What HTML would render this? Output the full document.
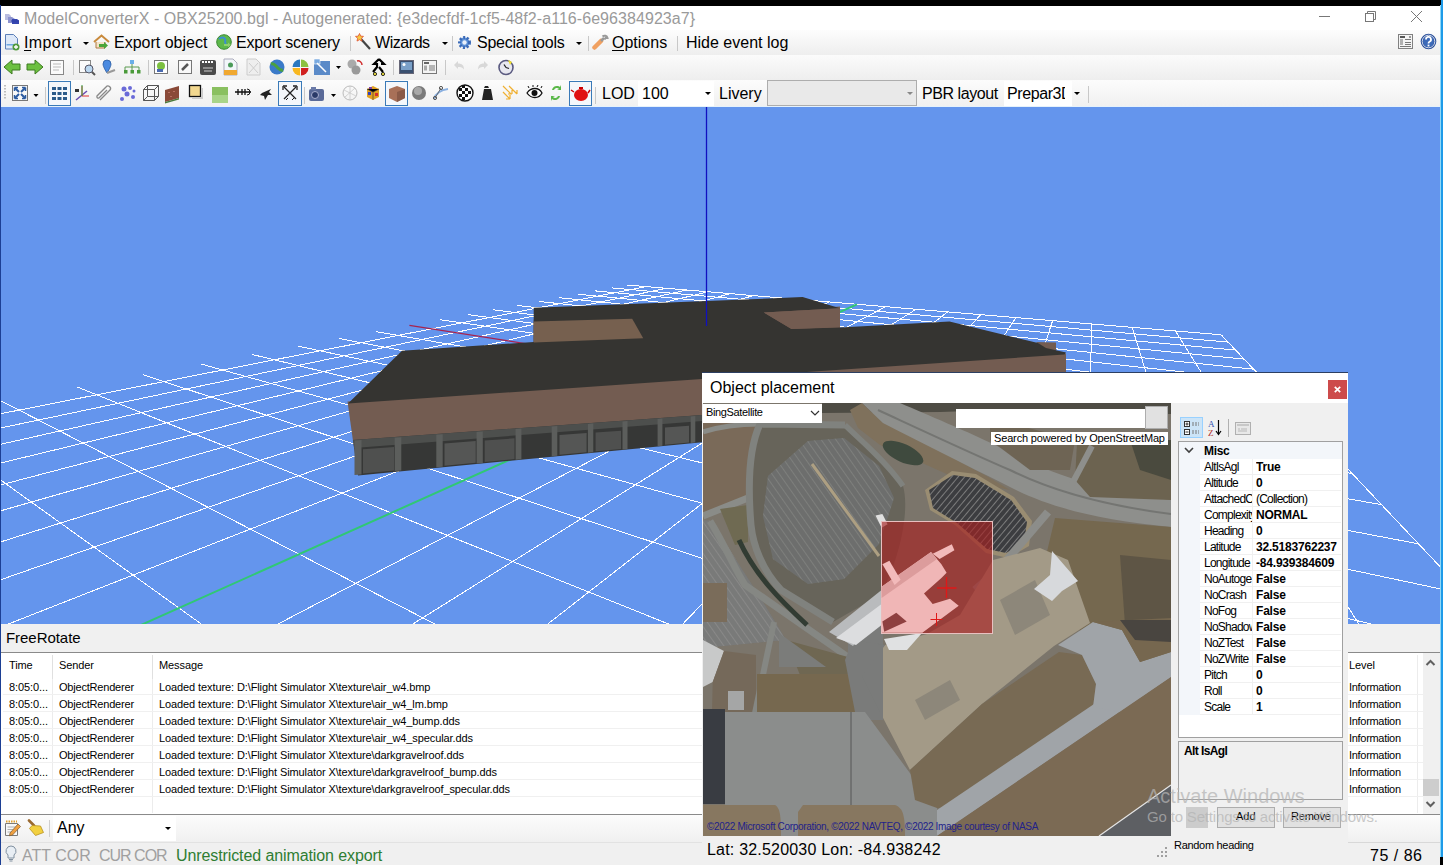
<!DOCTYPE html>
<html><head><meta charset="utf-8">
<style>
*{box-sizing:border-box}
html,body{margin:0;padding:0}
body{width:1443px;height:865px;overflow:hidden;position:relative;background:#f0f0f0;font-family:"Liberation Sans",sans-serif;color:#000}
.a{position:absolute}
.t{position:absolute;white-space:pre;line-height:1}
.sep{position:absolute;width:1px;background:#c8c8c8}
.ic{position:absolute}
</style></head><body>

<!-- title bar -->
<div class="a" style="left:0;top:5px;width:1443px;height:25px;background:#fff"></div>
<svg class="ic" style="left:3px;top:13px" width="17" height="12" viewBox="0 0 17 12"><path d="M2 1h4l2 2v4H2z" fill="#b9bde0"/><path d="M5 4h4l3 2v4H5z" fill="#8c93cf"/><path d="M9 6h5l2 1.5V11H9z" fill="#3646b0"/><path d="M8 8h8" stroke="#2e3ea8"/></svg>
<div class="t" style="left:24px;top:11px;font-size:16px;color:#9a9a9a;letter-spacing:0.06px">ModelConverterX - OBX25200.bgl - Autogenerated: {e3decfdf-1cf5-48f2-a116-6e96384923a7}</div>
<div class="a" style="left:1319px;top:16px;width:11px;height:1px;background:#777"></div>
<svg class="ic" style="left:1364px;top:10px" width="13" height="13" viewBox="0 0 13 13"><rect x="1.5" y="3.5" width="8" height="8" fill="none" stroke="#777"/><path d="M3.5 3.5V1.5h8v8h-2" fill="none" stroke="#777"/></svg>
<svg class="ic" style="left:1410px;top:10px" width="13" height="13" viewBox="0 0 13 13"><path d="M1 1L12 12M12 1L1 12" stroke="#777" stroke-width="1"/></svg>
<!-- toolbar 1 -->
<div class="a" style="left:0;top:30px;width:1443px;height:25px;background:linear-gradient(#fdfdfd,#eeeeee)"></div>
<svg class="ic" style="left:4px;top:33px" width="16" height="18" viewBox="0 0 16 18"><path d="M1.5 1.5h8l4 4v10.5h-12z" fill="#dde8f8" stroke="#5b7fb8"/><rect x="2.5" y="11" width="8" height="1.5" fill="#6fa8e0"/><circle cx="12" cy="14" r="3.5" fill="#4f9a3a"/><path d="M12 12v4M10 14h4" stroke="#fff" stroke-width="1.3"/></svg>
<div class="t" style="left:24px;top:35px;font-size:16px;letter-spacing:0.4px">Import</div>
<div class="a" style="left:24px;top:50px;width:7px;height:1px;background:#000"></div>
<svg class="ic" style="left:83px;top:42px" width="6" height="4"><path d="M0 0h6L3 3z" fill="#000"/></svg>
<svg class="ic" style="left:93px;top:34px" width="17" height="16" viewBox="0 0 17 16"><path d="M1 8L8.5 1.5L16 8" fill="none" stroke="#c98a3c" stroke-width="2"/><path d="M3 8v6h9V8" fill="#f3e2c6" stroke="#b07a40"/><path d="M6 10h5V8l4 3.5-4 3.5v-2H6z" fill="#4aa53a"/></svg>
<div class="t" style="left:114px;top:35px;font-size:16px">Export object</div>
<svg class="ic" style="left:216px;top:34px" width="16" height="16" viewBox="0 0 16 16"><circle cx="8" cy="8" r="7.3" fill="#5db84a" stroke="#3d8a35"/><path d="M3 5c2-2 5-2 6 0s-1 3 1 5" fill="none" stroke="#3c8fd0" stroke-width="2"/><path d="M8 10h4V8.5l3 2.5-3 2.5V12H8z" fill="#8fd070"/></svg>
<div class="t" style="left:236px;top:35px;font-size:16px;letter-spacing:-0.2px">Export scenery</div>
<div class="sep" style="left:350px;top:36px;height:15px"></div>
<svg class="ic" style="left:355px;top:33px" width="16" height="17" viewBox="0 0 16 17"><path d="M6 6L15 16" stroke="#444" stroke-width="2.2"/><path d="M4.5 0.5l1.2 2.6 2.8.3-2.1 1.9.6 2.8-2.5-1.4-2.5 1.4.6-2.8-2.1-1.9 2.8-.3z" fill="#f6c940" stroke="#e05030" stroke-width="0.8"/></svg>
<div class="t" style="left:375px;top:35px;font-size:16px;letter-spacing:-0.45px">Wizards</div>
<svg class="ic" style="left:442px;top:42px" width="6" height="4"><path d="M0 0h6L3 3z" fill="#000"/></svg>
<div class="sep" style="left:452px;top:36px;height:15px"></div>
<svg class="ic" style="left:457px;top:35px" width="15" height="15" viewBox="0 0 15 15"><circle cx="7.5" cy="7.5" r="5" fill="#5b8fd6" stroke="#3a6ab8" stroke-width="3" stroke-dasharray="2 1.6"/><circle cx="7.5" cy="7.5" r="2.2" fill="#e8f0fb"/></svg>
<div class="t" style="left:477px;top:35px;font-size:16px;letter-spacing:-0.25px">Special tools</div>
<div class="a" style="left:532px;top:50px;width:5px;height:1px;background:#000"></div>
<svg class="ic" style="left:576px;top:42px" width="6" height="4"><path d="M0 0h6L3 3z" fill="#000"/></svg>
<div class="sep" style="left:588px;top:36px;height:15px"></div>
<svg class="ic" style="left:592px;top:33px" width="17" height="17" viewBox="0 0 17 17"><path d="M2.5 14.5L9 8" stroke="#f0a060" stroke-width="4.5" stroke-linecap="round"/><path d="M9 8l3-3" stroke="#999" stroke-width="2.5"/><path d="M10.5 3.5a3 3 0 0 1 5 1.5l-2 0-1 1.5" fill="none" stroke="#999" stroke-width="2"/></svg>
<div class="t" style="left:612px;top:35px;font-size:16px">Options</div>
<div class="a" style="left:612px;top:50px;width:12px;height:1px;background:#000"></div>
<div class="sep" style="left:677px;top:36px;height:15px"></div>
<div class="t" style="left:686px;top:35px;font-size:16px">Hide event log</div>
<svg class="ic" style="left:1397px;top:33px" width="17" height="17" viewBox="0 0 17 17" shape-rendering="crispEdges"><rect x="1.5" y="1.5" width="14" height="14" fill="#f4f4f4" stroke="#808080"/><rect x="3" y="3" width="5" height="2" fill="#555"/><rect x="12" y="3" width="2" height="2" fill="#999"/><rect x="3" y="6" width="3" height="6" fill="#b0b0b0"/><path d="M8 6.5h6M8 9.5h6M8 11.5h6M3 13.5h11" stroke="#777"/></svg>
<svg class="ic" style="left:1420px;top:33px" width="17" height="17" viewBox="0 0 17 17"><circle cx="8.5" cy="8.5" r="7.8" fill="#2a4f9a"/><circle cx="8.5" cy="8.5" r="6.3" fill="none" stroke="#fff" stroke-width="0.8"/><circle cx="8.5" cy="8.5" r="5.5" fill="#3d6ab8"/><path d="M6 6.5a2.5 2.5 0 1 1 3.5 2.2c-.8.4-1 .9-1 1.8" fill="none" stroke="#fff" stroke-width="1.8"/><rect x="7.6" y="11.6" width="1.8" height="1.8" fill="#fff"/></svg>
<!-- toolbar 2 -->
<div class="a" style="left:0;top:55px;width:1443px;height:25px;background:linear-gradient(#fbfbfb,#eeeeee)"></div>
<svg class="ic" style="left:3px;top:58px" width="520" height="18" viewBox="0 0 520 18">
<path d="M1 9L9 2v4h8v6H9v4z" fill="#6cc040" stroke="#3d7a20"/>
<path d="M40 9L32 2v4h-8v6h8v4z" fill="#6cc040" stroke="#3d7a20"/>
<rect x="47.5" y="2.5" width="13" height="14" fill="#fbfbfb" stroke="#888"/><path d="M50 6h8M50 9h8M50 12h6" stroke="#bbb"/>
<rect x="70" y="2" width="1" height="15" fill="#c8c8c8"/>
<rect x="76.5" y="2.5" width="11" height="12" fill="#fbfbfb" stroke="#888"/><circle cx="86" cy="11" r="4" fill="#bcd8f0" stroke="#556"/><path d="M89 14l3 3" stroke="#555" stroke-width="2"/>
<path d="M104 2a4 4 0 0 1 4 4c0 3-4 9-4 9s-4-6-4-9a4 4 0 0 1 4-4z" fill="#4a8ae0" stroke="#2a5aa0" stroke-width="0.8"/><path d="M104 15l8-3" stroke="#999" stroke-width="2"/>
<rect x="127" y="2" width="4" height="4" fill="#6aaee8"/><path d="M129 6v3M122 9h14M122 9v3M129 9v3M136 9v3" stroke="#5a9a50"/><rect x="121" y="12" width="3.5" height="3.5" fill="#4a9a3a"/><rect x="127.5" y="12" width="3.5" height="3.5" fill="#4a9a3a"/><rect x="134" y="12" width="3.5" height="3.5" fill="#4a9a3a"/>
<rect x="145" y="2" width="1" height="15" fill="#c8c8c8"/>
<rect x="151.5" y="2.5" width="13" height="13" fill="#fff" stroke="#777"/><circle cx="158" cy="8" r="4" fill="#7cc040"/><rect x="154" y="11" width="6" height="3" fill="#4a6ab0"/>
<rect x="175.5" y="2.5" width="13" height="13" fill="#f8f8f8" stroke="#777"/><path d="M179 12l6-6" stroke="#555" stroke-width="2.5"/>
<rect x="197" y="2" width="16" height="15" rx="2" fill="#4a4a4a"/><path d="M199 4h12" stroke="#fff" stroke-width="2" stroke-dasharray="2 1"/><path d="M200 10h10M201 13h8" stroke="#ccc"/>
<path d="M221 1h9l4 4v12h-13z" fill="#f2f6fa" stroke="#aab"/><rect x="221" y="12" width="13" height="5" fill="#f0a830"/><circle cx="227.5" cy="7" r="2.5" fill="#4a9a5a"/>
<path d="M244 1h9l4 4v12h-13z" fill="#eee" stroke="#ccc"/><path d="M246 5l9 10M255 5l-9 10" stroke="#ccc"/>
<circle cx="274" cy="9" r="7.5" fill="#3a7ac8"/><path d="M268 6c3-1 4 1 6 3s3 4 6 3" fill="none" stroke="#4aa040" stroke-width="3"/>
<path d="M297 9V1.5a7.5 7.5 0 0 0-7.5 7.5z" fill="#2a78c0"/><path d="M298 9V1.5a7.5 7.5 0 0 1 7.5 7.5z" fill="#8cc040"/><path d="M297 10v7.5A7.5 7.5 0 0 1 289.5 10z" fill="#f8b820"/><path d="M298 10v7.5a7.5 7.5 0 0 0 7.5-7.5z" fill="#d02020"/>
<rect x="311" y="3" width="16" height="14" fill="#5a8ac8"/><rect x="311" y="1" width="6" height="5" fill="#7aaae0" stroke="#fff" stroke-width="0.6"/><path d="M314 5l9 9" stroke="#fff" stroke-width="1.5"/>
<path d="M333 8h5l-2.5 3z" fill="#000"/>
<circle cx="349" cy="6" r="4.5" fill="#aaa"/><circle cx="353" cy="12" r="4.5" fill="#999"/><path d="M354 3a4 4 0 0 1 5 4" fill="none" stroke="#d03030" stroke-width="1.5"/>
<path d="M376 1l-5 5h3v3l-4 5M376 9l4 5M376 1l5 5h-3" fill="none" stroke="#000" stroke-width="2.2"/><circle cx="372" cy="16" r="1.6" fill="#f0e040" stroke="#000" stroke-width="0.8"/><circle cx="380" cy="16" r="1.6" fill="#f0e040" stroke="#000" stroke-width="0.8"/>
<rect x="390" y="2" width="1" height="15" fill="#c8c8c8"/>
<rect x="396.5" y="2.5" width="14" height="13" fill="#3a5070" stroke="#667"/><rect x="398" y="4" width="11" height="8" fill="#7aa0c8"/><circle cx="401" cy="6.5" r="1.5" fill="#fff"/>
<rect x="419.5" y="2.5" width="14" height="13" fill="#f4f4f4" stroke="#777"/><rect x="421" y="4" width="5" height="2" fill="#666"/><rect x="421" y="7.5" width="3" height="5" fill="#aaa"/><path d="M426 8h6M426 10h6M426 12h6" stroke="#777"/>
<rect x="442" y="2" width="1" height="15" fill="#c8c8c8"/>
<path d="M451 7l4-4v2.5c4 0 6 2 6 6-1.5-2-3-2.5-6-2.5V11z" fill="#d8d8d8"/>
<path d="M485 7l-4-4v2.5c-4 0-6 2-6 6 1.5-2 3-2.5 6-2.5V11z" fill="#d8d8d8"/>
<circle cx="503" cy="9.5" r="7" fill="#e8e8f0" stroke="#5a5a80" stroke-width="1.6"/><path d="M503 9.5l-2-3M503 9.5l3 1" stroke="#222" stroke-width="1.3"/><path d="M505 2l4 2-2 3z" fill="#f0e030"/>
</svg>
<!-- toolbar 3 -->
<div class="a" style="left:0;top:80px;width:1443px;height:27px;background:linear-gradient(#fcfcfc,#f0f0f0)"></div>
<div class="a" style="left:0;top:106px;width:1443px;height:1px;background:#e6f2fb"></div>
<svg class="ic" style="left:0;top:80px" width="600" height="27" viewBox="0 0 600 27">
<path d="M5 5v1.5M5 8v1.5M5 11v1.5M5 14v1.5M5 17v1.5" stroke="#aaa" stroke-width="1.5"/>
<rect x="12.5" y="5.5" width="15" height="15" fill="#f8f8f8" stroke="#777"/><path d="M15 8l4 4M25 8l-4 4M15 18l4-4M25 18l-4-4" stroke="#2a5aa0" stroke-width="2"/><path d="M14.5 7.5h3.5M14.5 7.5v3.5M25.5 7.5h-3.5M25.5 7.5v3.5M14.5 18.5h3.5M14.5 18.5v-3.5M25.5 18.5h-3.5M25.5 18.5v-3.5" stroke="#2a5aa0" stroke-width="1.5"/>
<path d="M33.5 14h5l-2.5 3z" fill="#000"/>
<rect x="45" y="7" width="1" height="17" fill="#c8c8c8"/>
<rect x="48.5" y="1.5" width="22" height="24" fill="#f4f7fb" stroke="#3a7ab8"/><g fill="#2a5a8a"><rect x="52" y="7" width="4" height="3"/><rect x="57.5" y="7" width="4" height="3"/><rect x="63" y="7" width="4" height="3"/><rect x="52" y="12" width="4" height="3"/><rect x="57.5" y="12" width="4" height="3"/><rect x="63" y="12" width="4" height="3"/><rect x="52" y="17" width="4" height="3"/><rect x="57.5" y="17" width="4" height="3"/><rect x="63" y="17" width="4" height="3"/></g>
<path d="M76 20l11-9" stroke="#6a4ab0" stroke-width="1.5"/><path d="M82 16h7M82 16V6" stroke="#e03030"/><path d="M82 16V5" stroke="#30a040"/><rect x="75" y="9" width="4" height="3" fill="#333"/>
<path d="M100 20l10-10a2.5 2.5 0 0 0-4-3l-9 9a1.5 1.5 0 0 0 2 2l8-8" fill="none" stroke="#888" stroke-width="1.3"/>
<g fill="#6a6ad8"><circle cx="124" cy="9" r="2.5"/><circle cx="130" cy="8" r="2"/><circle cx="127" cy="14" r="2.5"/><circle cx="133" cy="17" r="2"/><circle cx="122" cy="19" r="2"/><circle cx="134" cy="11" r="1.5"/></g>
<path d="M143.5 9.5h11v11h-11zM147.5 5.5h11v11h-11zM143.5 9.5l4-4M154.5 9.5l4-4M154.5 20.5l4-4M143.5 20.5l4-4" fill="none" stroke="#555"/>
<path d="M165 10l14-4v12l-14 4z" fill="#8a4a38"/><path d="M165 22l14-4v1.5l-14 4z" fill="#4a7a3a"/><g fill="#b87060"><rect x="168" y="12" width="2" height="1"/><rect x="173" y="11" width="2" height="1"/><rect x="170" y="16" width="2" height="1"/></g>
<rect x="189.5" y="5.5" width="11" height="11" fill="#f2d890" stroke="#111" stroke-width="1.3"/><rect x="192" y="17" width="11" height="2" fill="#ccc"/><rect x="201" y="8" width="2" height="11" fill="#ccc"/>
<rect x="212" y="7" width="16" height="16" fill="#8ac060"/><rect x="212" y="15" width="16" height="8" fill="#a8d488"/>
<path d="M235 12h16M238 9v6M242 9v6M245 9v6" stroke="#111" stroke-width="1.3"/><path d="M247 9a3 3 0 0 1 0 6" fill="none" stroke="#111"/>
<path d="M262 13l9-4-2 3 3 3-4 0-3 5-1-4-4-1z" fill="#222"/>
<rect x="278.5" y="1.5" width="23" height="24" fill="#f4f7fb" stroke="#3a7ab8"/><path d="M284 7l12 12M296 7l-12 12" stroke="#222" stroke-width="1.3"/><path d="M283 6h4M283 6v4M297 6h-4M297 6v4" stroke="#222" stroke-width="1.3"/><path d="M286 20l2-2M292 20l2-2" stroke="#222"/>
<rect x="304" y="7" width="1" height="17" fill="#c8c8c8"/>
<rect x="309" y="9" width="15" height="12" rx="2" fill="#5a6a98"/><rect x="311" y="7" width="5" height="3" fill="#6a7aa8"/><circle cx="315" cy="15" r="3.5" fill="#2a3a68" stroke="#aab0d0"/>
<path d="M331 14h5l-2.5 3z" fill="#000"/>
<circle cx="350" cy="13" r="7" fill="none" stroke="#bbb"/><path d="M344 10l12 6M345 17l10-9M350 6v14" stroke="#c8c8c8" stroke-width="0.8"/>
<path d="M367 9l6-3 6 3v8l-6 3-6-3z" fill="#e0a020"/><path d="M367 9l6 3 6-3M373 12v8" stroke="#333" stroke-width="0.6"/><rect x="368" y="12" width="3" height="3" fill="#3040c0"/><rect x="375" y="13" width="3" height="3" fill="#d03030"/><rect x="369" y="7" width="3" height="2" fill="#8040a0"/>
<rect x="385.5" y="1.5" width="22" height="24" fill="#f4f7fb" stroke="#3a7ab8"/><path d="M389 9l8-3 8 3v9l-8 4-8-4z" fill="#a87058"/><path d="M397 12l8-3v9l-8 4z" fill="#8a5a48"/>
<circle cx="419" cy="13" r="7" fill="#7a7a7a"/><circle cx="418" cy="11" r="4" fill="#a8a8a8"/>
<path d="M434 19c2-6 6-9 14-10" fill="none" stroke="#8ab0e0" stroke-width="2"/><circle cx="435" cy="18" r="1.6" fill="none" stroke="#555"/><circle cx="441" cy="8" r="1.6" fill="none" stroke="#555"/><path d="M441 8l-6 10" stroke="#555" stroke-width="0.8"/>
<circle cx="465" cy="13" r="8" fill="#fff" stroke="#111" stroke-width="1.4"/><path d="M459 8h3v3h-3zM465 8h3v3h-3zM462 11h3v3h-3zM468 11h3v3h-3zM459 14h3v3h-3zM465 14h3v3h-3zM462 17h3v3h-3zM462 5h3v3h-3z" fill="#111"/>
<path d="M484 8h5l-1-2h-3zM482 20l2-11h7l2 11z" fill="#222"/>
<path d="M503 6l8 8M509 6l8 8M503 12l7 7M512 14v-4M512 14h-4M517 14v-4M510 19v-4M510 19h-4" stroke="#f0b030" stroke-width="1.2" fill="none"/>
<path d="M527 13c4-6 12-6 15 0-3 6-11 6-15 0z" fill="#fff" stroke="#111" stroke-width="1.3"/><circle cx="534.5" cy="13" r="3" fill="#111"/><path d="M529 8l-1-2M533 7V5M537 7l1-2M541 8l1-2" stroke="#111"/>
<path d="M552 10a5 5 0 0 1 8-3l1-2v5h-4l2-1a3 3 0 0 0-5 1z" fill="#5ab848"/><path d="M560 16a5 5 0 0 1-8 3l-1 2v-5h4l-2 1a3 3 0 0 0 5-1z" fill="#5ab848"/>
<rect x="569.5" y="1.5" width="22" height="24" fill="#f4f7fb" stroke="#3a7ab8"/><ellipse cx="581" cy="15" rx="7" ry="6" fill="#e01010"/><path d="M574 12l-3-2M588 13l2-3" stroke="#c00" stroke-width="1.5"/><rect x="579" y="7" width="4" height="2" fill="#c00"/>
<rect x="595" y="7" width="1" height="17" fill="#c8c8c8"/>
</svg>
<div class="t" style="left:602px;top:86px;font-size:16px">LOD</div>
<div class="a" style="left:638px;top:81px;width:76px;height:25px;background:#fff"></div>
<div class="t" style="left:642px;top:86px;font-size:16px">100</div>
<svg class="ic" style="left:705px;top:92px" width="6" height="4"><path d="M0 0h6L3 3z" fill="#000"/></svg>
<div class="t" style="left:719px;top:86px;font-size:16px">Livery</div>
<div class="a" style="left:767px;top:80px;width:150px;height:26px;background:#e9e9e9;border:1px solid #adadad"></div>
<svg class="ic" style="left:907px;top:92px" width="6" height="4"><path d="M0 0h6L3 3z" fill="#888"/></svg>
<div class="t" style="left:922px;top:86px;font-size:16px;letter-spacing:-0.44px">PBR layout</div>
<div class="a" style="left:1004px;top:81px;width:68px;height:25px;background:#fff"></div>
<div class="a" style="left:1007px;top:81px;width:58px;height:25px;overflow:hidden"><div class="t" style="left:0;top:5px;font-size:16px;letter-spacing:-0.4px">Prepar3D</div></div>
<svg class="ic" style="left:1074px;top:92px" width="6" height="4"><path d="M0 0h6L3 3z" fill="#000"/></svg>
<div class="sep" style="left:1088px;top:86px;height:17px"></div>

<div class="a" style="left:0;top:107px;width:1443px;height:517px;background:#6495ed;overflow:hidden">
<svg width="1443" height="517" viewBox="0 107 1443 517" style="position:absolute;left:0;top:0">
<path d="M646.1 286.6L-50.0 423.7 M665.9 288.3L-50.0 438.6 M686.6 290.0L-50.0 455.7 M708.0 291.8L-50.0 475.3 M730.3 293.7L-50.0 498.2 M753.5 295.6L-50.0 525.3 M777.7 297.7L-50.0 557.8 M803.0 299.8L-50.0 597.4 M829.3 302.0L-22.0 635.9 M885.8 306.7L132.4 700.0 M916.0 309.3L291.3 700.0 M947.6 311.9L450.4 700.0 M980.9 314.7L609.5 700.0 M1015.8 317.6L768.7 700.0 M1052.6 320.7L928.0 700.0 M1091.3 323.9L1087.4 700.0 M1132.2 327.4L1246.8 700.0 M1175.4 331.0L1406.3 700.0 M1221.2 334.8L1500.0 630.2 M627.0 285.0L1221.2 334.8 M611.7 287.9L1228.0 342.1 M595.3 290.9L1235.6 350.1 M577.8 294.2L1244.1 359.1 M559.0 297.7L1253.7 369.2 M538.8 301.4L1264.5 380.8 M517.0 305.4L1277.0 393.9 M493.4 309.8L1291.4 409.2 M467.8 314.6L1308.2 427.0 M439.9 319.7L1328.1 448.1 M705.9 372.0L1352.1 473.5 M375.9 331.6L1381.5 504.6 M338.9 338.5L1418.4 543.8 M298.0 346.1L1466.2 594.4 M252.3 354.5L1500.0 655.1 M201.0 364.0L1410.1 700.0 M143.1 374.8L1134.0 700.0 M77.2 387.0L858.2 700.0 M1.4 401.0L582.6 700.0 M-50.0 443.7L307.2 700.0 M-50.0 602.7L32.1 700.0" stroke="#fff" stroke-width="1" fill="none" shape-rendering="crispEdges"/>
<path d="M409.4 325.4L705.9 372.0" stroke="#a8234e" stroke-width="1.2" fill="none"/>
<path d="M856.9 304.3L16.0 681.0" stroke="#30c874" stroke-width="2" fill="none"/>

<polygon points="347.5,401.5 1064.5,352.5 1066,354 1066,380 702,415.8 353,441" fill="#735c51"/>
<polygon points="353,440 702.3,415 702.3,442.2 358,475.4" fill="#363736"/>
<polygon points="353,440 702.3,415 702.3,421 354,448" fill="#4d4f4d"/>
<polygon points="363.0,449.3 394.0,447.0 394.0,470.5 363.0,473.4" fill="#4f504f"/>
<polygon points="444.5,443.4 475.7,441.1 475.7,462.7 444.5,465.7" fill="#555655"/>
<polygon points="484.7,440.5 514.5,438.3 514.5,459.0 484.7,461.9" fill="#4f504f"/>
<polygon points="559.5,435.1 586.6,433.1 586.6,452.2 559.5,454.8" fill="#555655"/>
<polygon points="595.6,432.5 621.0,430.7 621.0,448.9 595.6,451.3" fill="#4f504f"/>
<polygon points="665.0,427.5 689.0,425.8 689.0,442.5 665.0,444.7" fill="#555655"/>
<polygon points="354.5,440.6 361.5,440.1 361.5,474.4 354.5,474.9" fill="#5c5e5c"/>
<polygon points="394.7,437.8 401.3,437.3 401.3,470.6 394.7,471.1" fill="#5c5e5c"/>
<polygon points="436.3,434.8 442.7,434.3 442.7,466.7 436.3,467.2" fill="#5c5e5c"/>
<polygon points="476.6,431.9 482.8,431.4 482.8,462.9 476.6,463.4" fill="#5c5e5c"/>
<polygon points="515.6,429.1 521.4,428.6 521.4,459.2 515.6,459.7" fill="#5c5e5c"/>
<polygon points="551.7,426.5 557.3,426.0 557.3,455.7 551.7,456.2" fill="#5c5e5c"/>
<polygon points="587.9,423.9 593.3,423.4 593.3,452.3 587.9,452.8" fill="#5c5e5c"/>
<polygon points="622.5,421.4 627.5,420.9 627.5,449.0 622.5,449.5" fill="#5c5e5c"/>
<polygon points="657.6,418.9 662.4,418.4 662.4,445.7 657.6,446.2" fill="#5c5e5c"/>
<polygon points="690.7,416.5 695.3,416.0 695.3,442.6 690.7,443.1" fill="#5c5e5c"/>
<polygon points="533.7,319.5 632.2,316.8 643.2,338.2 533.7,344" fill="#76604f"/>
<polygon points="760,311 840,306.5 840,329 791.5,331" fill="#735c51"/>
<polygon points="1036,342 1056,342.5 1056,351 1046,349" fill="#735c51"/>
<polygon points="348,403.5 402,350.7 533.7,342 533.7,321 533.7,307.7 700,301.3 802.6,297.1 840,308.2 763.8,312.4 791.5,329 840,327.5 949.5,321.5 1038,343 1046,348 1066,352.6 1064.5,354.5 702,379 348,403.5" fill="#353431"/>
<polygon points="533.7,321.6 632.2,318.8 643.2,338.2 533.7,342.4" fill="#76604f"/>
<polygon points="763.8,312.4 840,308.2 840,327 791.5,329" fill="#735c51"/>
<path d="M706.5 107V326" stroke="#1010c0" stroke-width="1.3"/>
</svg>
</div>

<div class="a" style="left:0;top:624px;width:1443px;height:28px;background:#f0f0f0"></div>
<div class="t" style="left:6px;top:630px;font-size:15px;letter-spacing:-0.05px">FreeRotate</div>
<div class="a" style="left:0;top:652px;width:1441px;height:163px;background:#fff;border-top:1px solid #8a8a8a;border-bottom:1px solid #8a8a8a"></div>
<div class="a" style="left:52px;top:655px;width:1px;height:158px;background:#ececec"></div>
<div class="a" style="left:152px;top:655px;width:1px;height:158px;background:#ececec"></div>
<div class="a" style="left:52px;top:655px;width:1px;height:24px;background:#e0e0e0"></div>
<div class="a" style="left:152px;top:655px;width:1px;height:24px;background:#e0e0e0"></div>
<div class="a" style="left:1417px;top:655px;width:1px;height:158px;background:#ececec"></div>
<div class="t" style="left:9px;top:660px;font-size:11px;letter-spacing:-0.1px">Time</div>
<div class="t" style="left:59px;top:660px;font-size:11px;letter-spacing:-0.1px">Sender</div>
<div class="t" style="left:159px;top:660px;font-size:11px;letter-spacing:-0.1px">Message</div>
<div class="t" style="left:1349px;top:660px;font-size:11px;letter-spacing:-0.1px">Level</div>
<div class="t" style="left:9px;top:682px;font-size:11px;letter-spacing:-0.1px">8:05:0...</div>
<div class="t" style="left:59px;top:682px;font-size:11px;letter-spacing:-0.1px;letter-spacing:-0.2px">ObjectRenderer</div>
<div class="t" style="left:159px;top:682px;font-size:11px;letter-spacing:-0.1px">Loaded texture: D:\Flight Simulator X\texture\air_w4.bmp</div>
<div class="t" style="left:1349px;top:682px;font-size:11px;letter-spacing:-0.1px;letter-spacing:-0.3px">Information</div>
<div class="a" style="left:3px;top:694px;width:1420px;height:1px;background:#f0f0f0"></div>
<div class="t" style="left:9px;top:699px;font-size:11px;letter-spacing:-0.1px">8:05:0...</div>
<div class="t" style="left:59px;top:699px;font-size:11px;letter-spacing:-0.1px;letter-spacing:-0.2px">ObjectRenderer</div>
<div class="t" style="left:159px;top:699px;font-size:11px;letter-spacing:-0.1px">Loaded texture: D:\Flight Simulator X\texture\air_w4_lm.bmp</div>
<div class="t" style="left:1349px;top:699px;font-size:11px;letter-spacing:-0.1px;letter-spacing:-0.3px">Information</div>
<div class="a" style="left:3px;top:711px;width:1420px;height:1px;background:#f0f0f0"></div>
<div class="t" style="left:9px;top:716px;font-size:11px;letter-spacing:-0.1px">8:05:0...</div>
<div class="t" style="left:59px;top:716px;font-size:11px;letter-spacing:-0.1px;letter-spacing:-0.2px">ObjectRenderer</div>
<div class="t" style="left:159px;top:716px;font-size:11px;letter-spacing:-0.1px">Loaded texture: D:\Flight Simulator X\texture\air_w4_bump.dds</div>
<div class="t" style="left:1349px;top:716px;font-size:11px;letter-spacing:-0.1px;letter-spacing:-0.3px">Information</div>
<div class="a" style="left:3px;top:728px;width:1420px;height:1px;background:#f0f0f0"></div>
<div class="t" style="left:9px;top:733px;font-size:11px;letter-spacing:-0.1px">8:05:0...</div>
<div class="t" style="left:59px;top:733px;font-size:11px;letter-spacing:-0.1px;letter-spacing:-0.2px">ObjectRenderer</div>
<div class="t" style="left:159px;top:733px;font-size:11px;letter-spacing:-0.1px">Loaded texture: D:\Flight Simulator X\texture\air_w4_specular.dds</div>
<div class="t" style="left:1349px;top:733px;font-size:11px;letter-spacing:-0.1px;letter-spacing:-0.3px">Information</div>
<div class="a" style="left:3px;top:745px;width:1420px;height:1px;background:#f0f0f0"></div>
<div class="t" style="left:9px;top:750px;font-size:11px;letter-spacing:-0.1px">8:05:0...</div>
<div class="t" style="left:59px;top:750px;font-size:11px;letter-spacing:-0.1px;letter-spacing:-0.2px">ObjectRenderer</div>
<div class="t" style="left:159px;top:750px;font-size:11px;letter-spacing:-0.1px">Loaded texture: D:\Flight Simulator X\texture\darkgravelroof.dds</div>
<div class="t" style="left:1349px;top:750px;font-size:11px;letter-spacing:-0.1px;letter-spacing:-0.3px">Information</div>
<div class="a" style="left:3px;top:762px;width:1420px;height:1px;background:#f0f0f0"></div>
<div class="t" style="left:9px;top:767px;font-size:11px;letter-spacing:-0.1px">8:05:0...</div>
<div class="t" style="left:59px;top:767px;font-size:11px;letter-spacing:-0.1px;letter-spacing:-0.2px">ObjectRenderer</div>
<div class="t" style="left:159px;top:767px;font-size:11px;letter-spacing:-0.1px">Loaded texture: D:\Flight Simulator X\texture\darkgravelroof_bump.dds</div>
<div class="t" style="left:1349px;top:767px;font-size:11px;letter-spacing:-0.1px;letter-spacing:-0.3px">Information</div>
<div class="a" style="left:3px;top:779px;width:1420px;height:1px;background:#f0f0f0"></div>
<div class="t" style="left:9px;top:784px;font-size:11px;letter-spacing:-0.1px">8:05:0...</div>
<div class="t" style="left:59px;top:784px;font-size:11px;letter-spacing:-0.1px;letter-spacing:-0.2px">ObjectRenderer</div>
<div class="t" style="left:159px;top:784px;font-size:11px;letter-spacing:-0.1px">Loaded texture: D:\Flight Simulator X\texture\darkgravelroof_specular.dds</div>
<div class="t" style="left:1349px;top:784px;font-size:11px;letter-spacing:-0.1px;letter-spacing:-0.3px">Information</div>
<div class="a" style="left:3px;top:796px;width:1420px;height:1px;background:#f0f0f0"></div>
<div class="a" style="left:1423px;top:653px;width:17px;height:161px;background:#f0f0f0"></div>
<div class="a" style="left:1423px;top:779px;width:16px;height:17px;background:#cdcdcd"></div>
<svg class="ic" style="left:1425px;top:658px" width="11" height="9"><path d="M1.5 7L5.5 3L9.5 7" fill="none" stroke="#606060" stroke-width="2"/></svg>
<svg class="ic" style="left:1425px;top:800px" width="11" height="9"><path d="M1.5 2L5.5 6L9.5 2" fill="none" stroke="#606060" stroke-width="2"/></svg>
<div class="a" style="left:0;top:815px;width:1443px;height:27px;background:linear-gradient(#fcfcfc,#f0f0f0)"></div>
<svg class="ic" style="left:4px;top:819px" width="44" height="18" viewBox="0 0 44 18"><path d="M1.5 4.5h12v12h-12z" fill="#f8f8f8" stroke="#7a7a7a"/><path d="M2 2.5h11" stroke="#e0a030" stroke-width="2" stroke-dasharray="1.5 1"/><path d="M3.5 8h8M3.5 10.5h8M3.5 13h6" stroke="#b0b0b0"/><path d="M6 14L14 5l2.5 2.5-8 8.5-3 .8z" fill="#f0a040" stroke="#7a5a30" stroke-width="0.7"/><path d="M25 1.5l5 5" stroke="#9a6a30" stroke-width="2.6" stroke-linecap="round"/><path d="M28 6.5l-2.5 3 6 7 8-3-3-6.5z" fill="#f2d040" stroke="#b89020" stroke-width="0.8"/></svg>
<div class="sep" style="left:49px;top:820px;height:17px;background:#cfcfcf"></div>
<div class="a" style="left:53px;top:816px;width:123px;height:25px;background:#fff"></div>
<div class="t" style="left:57px;top:820px;font-size:16px">Any</div>
<svg class="ic" style="left:165px;top:827px" width="6" height="4"><path d="M0 0h6L3 3z" fill="#000"/></svg>
<div class="a" style="left:0;top:842px;width:1443px;height:23px;background:#f0f0f0;border-top:1px solid #e2e2e2"></div>
<svg class="ic" style="left:5px;top:845px" width="12" height="17" viewBox="0 0 12 17"><path d="M6 1a5 5 0 0 0-3 9v3h6v-3a5 5 0 0 0-3-9z" fill="#e8eef4" stroke="#8090a0"/><path d="M4 14.5h4M4.5 16h3" stroke="#8090a0"/></svg>
<div class="t" style="left:22px;top:848px;font-size:16px;color:#a0a0a0">ATT COR</div><div class="t" style="left:99px;top:848px;font-size:16px;color:#a0a0a0;letter-spacing:-1px">CUR COR</div>
<div class="t" style="left:176px;top:848px;font-size:16px;color:#2e7d32;letter-spacing:-0.1px">Unrestricted animation export</div>
<div class="t" style="left:1370px;top:848px;font-size:16px;letter-spacing:0.5px">75 / 86</div>
<div class="a" style="left:1348px;top:842px;width:93px;height:1px;background:#d8d8d8"></div>
<div class="a" style="left:702px;top:372px;width:646px;height:493px;background:#f0f0f0"></div>
<div class="a" style="left:702px;top:372px;width:646px;height:1px;background:#2c3f62"></div>
<div class="a" style="left:702px;top:373px;width:646px;height:30px;background:#fff"></div>
<div class="t" style="left:710px;top:380px;font-size:16px">Object placement</div>
<div class="a" style="left:1328px;top:380px;width:19px;height:19px;background:#cd4b4b"></div>
<svg class="ic" style="left:1334px;top:386px" width="7" height="7"><path d="M0.8 0.8L6.2 6.2M6.2 0.8L0.8 6.2" stroke="#fff" stroke-width="1.7"/></svg>
<div class="a" style="left:1180px;top:417px;width:23px;height:21px;background:#cce4f7;border:1px solid #99d1ff"></div>
<svg class="ic" style="left:1180px;top:417px" width="75" height="21" viewBox="0 0 75 21"><rect x="4.5" y="4.5" width="5" height="5" fill="#fff" stroke="#333"/><path d="M5.5 7h3M7 5.5v3" stroke="#333"/><rect x="4.5" y="12.5" width="5" height="5" fill="#fff" stroke="#333"/><path d="M5.5 15h3" stroke="#333"/><path d="M12 6h7M12 8h7M12 14h7M12 16h7" stroke="#777" stroke-dasharray="2 1"/><text x="28" y="10" font-family="Liberation Serif" font-size="9" fill="#3050b0">A</text><text x="28" y="19" font-family="Liberation Serif" font-size="9" fill="#b03030">Z</text><path d="M38.5 3v14M36 14l2.5 3.5L41 14" stroke="#000" stroke-width="1.2" fill="none"/><rect x="48" y="2" width="1" height="18" fill="#b0b0b0"/><rect x="55.5" y="5.5" width="15" height="12" fill="#e8e8e8" stroke="#b0b0b0"/><rect x="57" y="7" width="12" height="2" fill="#c8c8c8"/><path d="M58 12h2M61 12h6M58 14h9" stroke="#b8b8b8"/></svg>
<div class="a" style="left:1178px;top:441px;width:165px;height:297px;background:#fff;border:1px solid #a0a0a0"></div>
<div class="a" style="left:1179px;top:442px;width:163px;height:17px;background:#f3f6fa"></div>
<div class="a" style="left:1179px;top:459px;width:21px;height:256px;background:#f3f6fa"></div>
<svg class="ic" style="left:1184px;top:447px" width="10" height="7"><path d="M1 1l4 4 4-4" fill="none" stroke="#404040" stroke-width="1.6"/></svg>
<div class="t" style="left:1204px;top:445px;font-size:12px;font-weight:bold;letter-spacing:-0.3px">Misc</div>
<div class="a" style="left:1200px;top:474px;width:141px;height:1px;background:#f0f0f0"></div>
<div class="a" style="left:1204px;top:461px;width:48px;height:14px;overflow:hidden"><div class="t" style="left:0;top:0;font-size:12px;letter-spacing:-0.75px">AltIsAgl</div></div>
<div class="a" style="left:1256px;top:461px;width:85px;height:14px;overflow:hidden"><div class="t" style="left:0;top:0;font-size:12px;font-weight:bold;letter-spacing:-0.2px">True</div></div>
<div class="a" style="left:1200px;top:490px;width:141px;height:1px;background:#f0f0f0"></div>
<div class="a" style="left:1204px;top:477px;width:48px;height:14px;overflow:hidden"><div class="t" style="left:0;top:0;font-size:12px;letter-spacing:-0.75px">Altitude</div></div>
<div class="a" style="left:1256px;top:477px;width:85px;height:14px;overflow:hidden"><div class="t" style="left:0;top:0;font-size:12px;font-weight:bold;letter-spacing:-0.2px">0</div></div>
<div class="a" style="left:1200px;top:506px;width:141px;height:1px;background:#f0f0f0"></div>
<div class="a" style="left:1204px;top:493px;width:48px;height:14px;overflow:hidden"><div class="t" style="left:0;top:0;font-size:12px;letter-spacing:-0.75px">AttachedC</div></div>
<div class="a" style="left:1256px;top:493px;width:85px;height:14px;overflow:hidden"><div class="t" style="left:0;top:0;font-size:12px;font-weight:normal;letter-spacing:-0.8px">(Collection)</div></div>
<div class="a" style="left:1200px;top:522px;width:141px;height:1px;background:#f0f0f0"></div>
<div class="a" style="left:1204px;top:509px;width:48px;height:14px;overflow:hidden"><div class="t" style="left:0;top:0;font-size:12px;letter-spacing:-0.75px">Complexity</div></div>
<div class="a" style="left:1256px;top:509px;width:85px;height:14px;overflow:hidden"><div class="t" style="left:0;top:0;font-size:12px;font-weight:bold;letter-spacing:-0.2px">NORMAL</div></div>
<div class="a" style="left:1200px;top:538px;width:141px;height:1px;background:#f0f0f0"></div>
<div class="a" style="left:1204px;top:525px;width:48px;height:14px;overflow:hidden"><div class="t" style="left:0;top:0;font-size:12px;letter-spacing:-0.75px">Heading</div></div>
<div class="a" style="left:1256px;top:525px;width:85px;height:14px;overflow:hidden"><div class="t" style="left:0;top:0;font-size:12px;font-weight:bold;letter-spacing:-0.2px">0</div></div>
<div class="a" style="left:1200px;top:554px;width:141px;height:1px;background:#f0f0f0"></div>
<div class="a" style="left:1204px;top:541px;width:48px;height:14px;overflow:hidden"><div class="t" style="left:0;top:0;font-size:12px;letter-spacing:-0.75px">Latitude</div></div>
<div class="a" style="left:1256px;top:541px;width:85px;height:14px;overflow:hidden"><div class="t" style="left:0;top:0;font-size:12px;font-weight:bold;letter-spacing:-0.2px">32.5183762237</div></div>
<div class="a" style="left:1200px;top:570px;width:141px;height:1px;background:#f0f0f0"></div>
<div class="a" style="left:1204px;top:557px;width:48px;height:14px;overflow:hidden"><div class="t" style="left:0;top:0;font-size:12px;letter-spacing:-0.75px">Longitude</div></div>
<div class="a" style="left:1256px;top:557px;width:85px;height:14px;overflow:hidden"><div class="t" style="left:0;top:0;font-size:12px;font-weight:bold;letter-spacing:-0.2px">-84.939384609</div></div>
<div class="a" style="left:1200px;top:586px;width:141px;height:1px;background:#f0f0f0"></div>
<div class="a" style="left:1204px;top:573px;width:48px;height:14px;overflow:hidden"><div class="t" style="left:0;top:0;font-size:12px;letter-spacing:-0.75px">NoAutoge</div></div>
<div class="a" style="left:1256px;top:573px;width:85px;height:14px;overflow:hidden"><div class="t" style="left:0;top:0;font-size:12px;font-weight:bold;letter-spacing:-0.2px">False</div></div>
<div class="a" style="left:1200px;top:602px;width:141px;height:1px;background:#f0f0f0"></div>
<div class="a" style="left:1204px;top:589px;width:48px;height:14px;overflow:hidden"><div class="t" style="left:0;top:0;font-size:12px;letter-spacing:-0.75px">NoCrash</div></div>
<div class="a" style="left:1256px;top:589px;width:85px;height:14px;overflow:hidden"><div class="t" style="left:0;top:0;font-size:12px;font-weight:bold;letter-spacing:-0.2px">False</div></div>
<div class="a" style="left:1200px;top:618px;width:141px;height:1px;background:#f0f0f0"></div>
<div class="a" style="left:1204px;top:605px;width:48px;height:14px;overflow:hidden"><div class="t" style="left:0;top:0;font-size:12px;letter-spacing:-0.75px">NoFog</div></div>
<div class="a" style="left:1256px;top:605px;width:85px;height:14px;overflow:hidden"><div class="t" style="left:0;top:0;font-size:12px;font-weight:bold;letter-spacing:-0.2px">False</div></div>
<div class="a" style="left:1200px;top:634px;width:141px;height:1px;background:#f0f0f0"></div>
<div class="a" style="left:1204px;top:621px;width:48px;height:14px;overflow:hidden"><div class="t" style="left:0;top:0;font-size:12px;letter-spacing:-0.75px">NoShadow</div></div>
<div class="a" style="left:1256px;top:621px;width:85px;height:14px;overflow:hidden"><div class="t" style="left:0;top:0;font-size:12px;font-weight:bold;letter-spacing:-0.2px">False</div></div>
<div class="a" style="left:1200px;top:650px;width:141px;height:1px;background:#f0f0f0"></div>
<div class="a" style="left:1204px;top:637px;width:48px;height:14px;overflow:hidden"><div class="t" style="left:0;top:0;font-size:12px;letter-spacing:-0.75px">NoZTest</div></div>
<div class="a" style="left:1256px;top:637px;width:85px;height:14px;overflow:hidden"><div class="t" style="left:0;top:0;font-size:12px;font-weight:bold;letter-spacing:-0.2px">False</div></div>
<div class="a" style="left:1200px;top:666px;width:141px;height:1px;background:#f0f0f0"></div>
<div class="a" style="left:1204px;top:653px;width:48px;height:14px;overflow:hidden"><div class="t" style="left:0;top:0;font-size:12px;letter-spacing:-0.75px">NoZWrite</div></div>
<div class="a" style="left:1256px;top:653px;width:85px;height:14px;overflow:hidden"><div class="t" style="left:0;top:0;font-size:12px;font-weight:bold;letter-spacing:-0.2px">False</div></div>
<div class="a" style="left:1200px;top:682px;width:141px;height:1px;background:#f0f0f0"></div>
<div class="a" style="left:1204px;top:669px;width:48px;height:14px;overflow:hidden"><div class="t" style="left:0;top:0;font-size:12px;letter-spacing:-0.75px">Pitch</div></div>
<div class="a" style="left:1256px;top:669px;width:85px;height:14px;overflow:hidden"><div class="t" style="left:0;top:0;font-size:12px;font-weight:bold;letter-spacing:-0.2px">0</div></div>
<div class="a" style="left:1200px;top:698px;width:141px;height:1px;background:#f0f0f0"></div>
<div class="a" style="left:1204px;top:685px;width:48px;height:14px;overflow:hidden"><div class="t" style="left:0;top:0;font-size:12px;letter-spacing:-0.75px">Roll</div></div>
<div class="a" style="left:1256px;top:685px;width:85px;height:14px;overflow:hidden"><div class="t" style="left:0;top:0;font-size:12px;font-weight:bold;letter-spacing:-0.2px">0</div></div>
<div class="a" style="left:1200px;top:714px;width:141px;height:1px;background:#f0f0f0"></div>
<div class="a" style="left:1204px;top:701px;width:48px;height:14px;overflow:hidden"><div class="t" style="left:0;top:0;font-size:12px;letter-spacing:-0.75px">Scale</div></div>
<div class="a" style="left:1256px;top:701px;width:85px;height:14px;overflow:hidden"><div class="t" style="left:0;top:0;font-size:12px;font-weight:bold;letter-spacing:-0.2px">1</div></div>
<div class="a" style="left:1252px;top:459px;width:1px;height:256px;background:#f0f0f0"></div>
<div class="a" style="left:1178px;top:741px;width:165px;height:59px;border:1px solid #a0a0a0;background:#f0f0f0"></div>
<div class="t" style="left:1184px;top:745px;font-size:12px;font-weight:bold;letter-spacing:-0.6px">Alt IsAgl</div>
<div class="a" style="left:1186px;top:807px;width:22px;height:21px;background:#cccccc"></div>
<div class="a" style="left:1217px;top:807px;width:58px;height:21px;background:#e1e1e1;border:1px solid #adadad"></div>
<div class="t" style="left:1236px;top:811px;font-size:11px">Add</div>
<div class="a" style="left:1283px;top:807px;width:58px;height:21px;background:#e1e1e1;border:1px solid #adadad"></div>
<div class="t" style="left:1291px;top:811px;font-size:11px;letter-spacing:-0.2px">Remove</div>
<div class="t" style="left:1174px;top:840px;font-size:11px;letter-spacing:-0.3px">Random heading</div>
<div class="t" style="left:707px;top:842px;font-size:16px;letter-spacing:0.2px">Lat: 32.520030 Lon: -84.938242</div>
<svg class="ic" style="left:1156px;top:846px" width="13" height="12"><g fill="#a0a0a0"><rect x="9" y="1" width="2" height="2"/><rect x="5" y="5" width="2" height="2"/><rect x="9" y="5" width="2" height="2"/><rect x="1" y="9" width="2" height="2"/><rect x="5" y="9" width="2" height="2"/><rect x="9" y="9" width="2" height="2"/></g></svg>

<div class="a" style="left:703px;top:403px;width:468px;height:433px;overflow:hidden;background:#7b756b">
<svg width="468" height="433" viewBox="703 403 468 433" style="position:absolute;left:0;top:0">
<defs>
<pattern id="stripes" width="5" height="5" patternUnits="userSpaceOnUse" patternTransform="rotate(40)"><rect width="5" height="5" fill="#3c3d40"/><rect width="1" height="5" fill="#7c7c7c"/></pattern>
<pattern id="pk" width="6" height="6" patternUnits="userSpaceOnUse" patternTransform="rotate(-35)"><rect width="6" height="6" fill="#707170"/><rect width="1" height="6" fill="#8c8c8a"/></pattern>
</defs>
<!-- UL: left brown -->
<path d="M703 411L760 411L750 500L703 516Z" fill="#7a6a59"/>
<!-- top band trees/dark -->
<path d="M822 403L1171 403L1171 414L1100 414L1000 410L940 412L822 413Z" fill="#4e4c44"/>
<!-- brown between ring road and highway -->
<path d="M850 410L862 403L883 423L927 444L990 478L1010 490L960 480L920 462L880 445L858 428Z" fill="#7f715c"/>
<ellipse cx="903" cy="453" rx="22" ry="9" fill="#3f4a3e" transform="rotate(25 903 453)"/>
<!-- bottom-left parking -->
<path d="M703 520L712 521L738 563L760 597L786 640L703 648Z" fill="url(#pk)"/>
<path d="M703 520L712 521L738 563L760 597L786 640L703 648Z" fill="#858684" opacity="0.45"/>
<path d="M703 583L727 583L727 622L703 622Z" fill="#7a6c5a"/>
<!-- roads -->
<path d="M703 516L748 498" stroke="#8a8c88" stroke-width="7"/>
<path d="M703 432C715 428 735 424 760 424" stroke="#8a8c88" stroke-width="5" fill="none"/>
<path d="M710 521C725 545 735 570 745 585L848 657L880 680" stroke="#858783" stroke-width="7" fill="none"/>
<path d="M720 509L748 505L748 542L735 545Z" fill="#6f6a52"/>
<!-- ring margin -->
<path d="M760 424L845 425C860 440 885 460 903 486C910 510 900 560 880 595L833 622L781 590C762 570 753 545 751 525C748 490 748 450 760 424Z" fill="#67645a"/>
<path d="M739 540C755 575 780 600 807 625" stroke="#323c33" stroke-width="5" fill="none"/>
<path d="M845 425L760 424C748 450 748 490 751 525C753 545 762 570 781 590L833 622" fill="none" stroke="#80827e" stroke-width="7"/>
<path d="M845 425C860 440 885 460 903 486" fill="none" stroke="#80827e" stroke-width="5.5"/>
<!-- parking lot -->
<path d="M768 476L808 441L844 438L879 466L894 498L879 544L844 579L808 584L773 559L763 516Z" fill="url(#pk)"/>
<path d="M768 476L808 441L844 438L879 466L894 498L879 544L844 579L808 584L773 559L763 516Z" fill="#6a6b69" opacity="0.4"/>
<path d="M812 464L879 556" stroke="#ad9f82" stroke-width="3"/>
<!-- highway -->
<path d="M884 403L900 403C930 416 960 428 1010 452C1045 470 1090 490 1171 500L1171 527C1100 520 1050 508 1010 487C960 462 920 442 883 423L862 403Z" fill="#8e8f8c"/>
<path d="M878 410C930 434 975 455 1010 470C1050 490 1100 505 1171 514" stroke="#747572" stroke-width="2" fill="none"/>
<!-- UR: vegetation top right -->
<path d="M1077 443L1171 440L1171 500L1090 497L1075 480Z" fill="#6c6350"/>
<path d="M1130 440L1171 440L1171 480L1140 470Z" fill="#4a4a3e"/>
<path d="M990 418L1075 440L1070 470L1030 470L990 440Z" fill="#6e6454"/>
<path d="M1072 484L1092 446" stroke="#8e8f8c" stroke-width="6"/>
<!-- dark parking oval -->
<path d="M925 490L952 471L976 474L1014 497L1032 521L1029 546L1008 558L986 553L955 525L930 510Z" fill="#9a8d72"/>
<path d="M929 490L953 475L975 478L1011 500L1027 522L1024 543L1006 553L987 549L957 523L933 508Z" fill="url(#stripes)"/>
<!-- road down-left from intersection -->
<path d="M1048 512L1000 568L975 590" stroke="#8c8d8a" stroke-width="8" fill="none"/>
<!-- brown field right -->
<path d="M1055 518L1171 527L1171 665L1095 662L1070 610L1045 560Z" fill="#75684f"/>
<path d="M1120 555L1171 560L1171 640L1125 625Z" fill="#5e5545"/>
<!-- tan apron -->
<path d="M993 560L1040 548L1068 560L1090 623L1054 646L982 704L910 770L880 712L862 676L885 645L927 634L960 615Z" fill="#a39a87"/>
<path d="M1000 600L1035 580L1050 615L1015 635Z" fill="#8d877a"/>
<path d="M915 700L950 680L960 700L925 720Z" fill="#8d877a"/>
<!-- white L building -->
<path d="M1052 551L1078 581L1062 591L1052 601L1034 589L1050 575Z" fill="#d7d9dc"/>
<!-- LL: top-left parking, building -->
<path d="M786 640L848 657L860 690L800 675Z" fill="#6f6752"/>
<path d="M703 640L724 651L712.7 682L703 687Z" fill="#c8c9c9"/>
<path d="M724 651L756 655L756 713L712 713L712.7 682Z" fill="#75695a"/>
<path d="M774 622L755 713" stroke="#858783" stroke-width="6"/>
<path d="M779 633L826 667L779 667Z" fill="#7b7c7a"/>
<path d="M848 628L883 625L883 720L860 720L848 690Z" fill="#7a7b7a"/>
<rect x="757" y="674" width="100" height="39" fill="#76684f"/>
<rect x="728" y="691" width="16" height="19" fill="#a5a6a6"/>
<path d="M853 640L885 645L862 676L880 712L855 712L845 660Z" fill="#7a7b7a"/>
<!-- big gray apron -->
<path d="M725 712L865 712L915 780L937 805L937 836L703 836L703 805L725 805Z" fill="#8b8d8c"/>
<rect x="703" y="709" width="22" height="95" fill="#393c42"/>
<path d="M851 712L851 805" stroke="#4a4a4a" stroke-width="0.8"/>
<!-- bottom brown patches -->
<path d="M703 805L775 805C780 808 781 815 781 836L703 836Z" fill="#877760"/>
<path d="M803 805L895 805C903 808 905 815 905 836L798 836L798 812Z" fill="#877760"/>
<!-- LR: grass oval -->
<path d="M910 770L982 704L1059 652L1082 655L1096 684L1093 707L998 780L952 807L937 808L915 800Z" fill="#786a54"/>
<!-- taxiways -->
<path d="M937 810L1171 652L1171 677L937 836Z" fill="#a0a4a8"/>
<path d="M1058 645L1093 622L1122 630L1140 662L1171 652L1171 677L1120 712L1093 707L1096 684L1082 655Z" fill="#a0a4a8"/>
<!-- bottom-right brown -->
<path d="M937 836L1171 677L1171 836Z" fill="#7b6a54"/>
<path d="M1093 622L1171 618L1171 652L1140 662L1122 630Z" fill="#76674f"/>
<path d="M1120 620L1171 620L1171 642L1135 640Z" fill="#494540"/>
<!-- runway -->
<path d="M1099 836L1171 785L1171 836Z" fill="#5d5f63"/>
<path d="M1099 836L1171 785" stroke="#e6e6e6" stroke-width="1.2"/>
<!-- long white building (outside red) -->
<path d="M829 632L881.6 590L881.6 612L853 646Z" fill="#b9bbbd"/>
<path d="M836 638L881.6 604L881.6 625L856 645Z" fill="#dcdddf"/>
<path d="M884 639L922 633L907 650L889 650Z" fill="#e0e1e2"/>
<path d="M875.5 515.6L882.4 513.9L887.6 524.3L881.6 527.7Z" fill="#e0e0e0"/>
<!-- red overlay -->
<rect x="881.5" y="521.5" width="111" height="112" fill="#a82020" opacity="0.64"/>
<rect x="881.5" y="521.5" width="111" height="112" fill="none" stroke="#e8c0c0" stroke-width="1"/>
<path d="M881.6 586.7L931 552L941.4 564.2L946.6 572.8L941.4 578L924 593.6L932.7 604L950 598.8L958.7 605.8L922.3 632.7L881.6 632.7Z" fill="#f0b6b6"/>
<path d="M881.6 586.7L931 552L937 559L881.6 598Z" fill="#dc9c9c"/>
<path d="M932.7 553.8L951.8 544.2L954.4 550.3L939.6 559Z" fill="#f2baba"/>
<path d="M882.4 564.2L889.4 560.7L900.6 579.8L894.6 585Z" fill="#f2baba"/>
<path d="M882.4 621.4L896.3 612.7L906.7 621.4L884.2 631.8Z" fill="#8e4040"/>
<path d="M946.5 577V598M937 588H956.5" stroke="#e01818" stroke-width="1.3"/>
<path d="M936.5 613V626M930.5 619.5H942.5" stroke="#e01818" stroke-width="1"/>
</svg>
<div class="t" style="left:4px;top:419px;font-size:10px;color:#22228a;letter-spacing:-0.32px">©2022 Microsoft Corporation, ©2022 NAVTEQ, ©2022 Image courtesy of NASA</div>
<div class="a" style="left:0;top:1px;width:119px;height:19px;background:#fff"></div>
<div class="t" style="left:3px;top:4px;font-size:11px;letter-spacing:-0.35px">BingSatellite</div>
<svg class="ic" style="left:107px;top:7px" width="10" height="7"><path d="M1 1l4 4 4-4" fill="none" stroke="#333" stroke-width="1.2"/></svg>
<div class="a" style="left:253px;top:6px;width:189px;height:19px;background:#fff"></div>
<div class="a" style="left:442px;top:3px;width:23px;height:23px;background:#e1e1e1;border:1px solid #adadad"></div>
<div class="a" style="left:288px;top:29px;width:177px;height:13px;background:#fff"></div>
<div class="t" style="left:291px;top:30px;font-size:11px;letter-spacing:-0.15px">Search powered by OpenStreetMap</div>
</div>

<div class="a" style="left:0;top:0;width:1441px;height:6px;background:#000"></div>
<div class="a" style="left:0;top:5px;width:1px;height:860px;background:#1c3f94"></div>
<div class="a" style="left:1440px;top:5px;width:1px;height:852px;background:#8fd8f8"></div>
<div class="a" style="left:1441px;top:0;width:2px;height:857px;background:#1e9be8"></div>
<div class="a" style="left:1440px;top:857px;width:3px;height:8px;background:#000"></div>

<div class="t" style="left:1147px;top:786px;font-size:20px;color:rgba(179,179,179,0.72)">Activate Windows</div>
<div class="t" style="left:1147px;top:809px;font-size:15px;letter-spacing:-0.17px;color:rgba(179,179,179,0.72)">Go to Settings to activate Windows.</div>
</body></html>
